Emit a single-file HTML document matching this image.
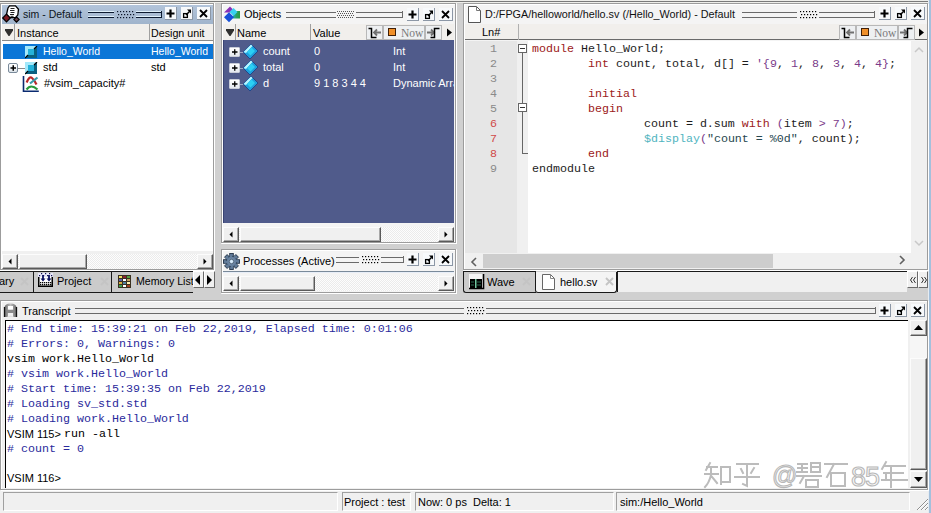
<!DOCTYPE html>
<html><head><meta charset="utf-8">
<style>
*{margin:0;padding:0;box-sizing:border-box}
html,body{width:931px;height:513px;overflow:hidden;background:#d0d0d0;font-family:"Liberation Sans",sans-serif;font-size:11px;color:#000}
.a{position:absolute}
.t{position:absolute;white-space:pre;line-height:13px}
.m{position:absolute;white-space:pre;font-family:"Liberation Mono",monospace;font-size:11.67px;line-height:15px}
.b{position:absolute;width:12px;height:13px;background:#f7f9fb;border-right:1px solid #8c97a6;border-bottom:1px solid #8c97a6}
.b svg{position:absolute;left:0;top:0}
.grip{position:absolute;height:9px}
.sbb{background:#f0f0f0;border:1px solid;border-color:#fcfcfc #5a5a5a #5a5a5a #fcfcfc;box-shadow:inset -1px -1px 0 #a8a8a8}
.hb{position:absolute;background:#f1efec}
</style></head><body>
<!-- top strip -->
<div class="a" style="left:0;top:0;width:931px;height:4px;background:#eeeeea"></div>
<div class="a" style="left:0;top:1px;width:931px;height:1px;background:#7a7a7a"></div>
<div class="a" style="left:0;top:3px;width:931px;height:1px;background:#c8c8c8"></div>

<!-- ============ SIM PANEL ============ -->
<div class="a" style="left:0;top:3px;width:215px;height:268px;background:#fff"></div>
<div class="a" style="left:2px;top:5px;width:211px;height:19px;background:linear-gradient(#b2c4da,#a0b4cc)"></div>
<svg class="a" style="left:0;top:0" width="24" height="24">
 <path d="M9.5 5.8H15.5L18.5 9.2L17.8 15L15.5 17.6H9.5L6.5 14.5L7.5 10L8 8z" fill="#fff" stroke="#000" stroke-width="1.3"/>
 <path d="M10.5 8.5h4M10 10.5h4.5M10.5 12.5h4M10 14.5h4M10.5 16.3h3" stroke="#222" stroke-width="1"/>
 <path d="M6.5 14.2L10.3 18L6.5 21.8L2.7 18z" fill="#7a1a22" stroke="#000" stroke-width="1.2"/>
 <path d="M16.5 16.8L19.2 19.5L16.5 22.2L13.8 19.5z" fill="#6a4048" stroke="#000" stroke-width="1.1"/>
</svg>
<div class="t" style="left:23px;top:8px;font-size:10.5px;color:#0c1420">sim - Default</div>
<svg class="a" style="left:88px;top:10px" width="74" height="10"><rect x="0" y="1" width="26" height="1" fill="#dff0fa"/><rect x="48" y="1" width="26" height="1" fill="#dff0fa"/><rect x="0" y="2" width="26" height="1" fill="#0c1a30"/><rect x="48" y="2" width="26" height="1" fill="#0c1a30"/><rect x="0" y="6" width="26" height="1" fill="#dff0fa"/><rect x="48" y="6" width="26" height="1" fill="#dff0fa"/><rect x="0" y="7" width="26" height="1" fill="#0c1a30"/><rect x="48" y="7" width="26" height="1" fill="#0c1a30"/><rect x="73" y="1" width="1" height="7" fill="#0c1a30"/><g fill="#0a1428"><rect x="29" y="1" width="1.2" height="1.2"/><rect x="32" y="1" width="1.2" height="1.2"/><rect x="35" y="1" width="1.2" height="1.2"/><rect x="38" y="1" width="1.2" height="1.2"/><rect x="41" y="1" width="1.2" height="1.2"/><rect x="44" y="1" width="1.2" height="1.2"/><rect x="30" y="4" width="1.2" height="1.2"/><rect x="33" y="4" width="1.2" height="1.2"/><rect x="36" y="4" width="1.2" height="1.2"/><rect x="39" y="4" width="1.2" height="1.2"/><rect x="42" y="4" width="1.2" height="1.2"/><rect x="45" y="4" width="1.2" height="1.2"/><rect x="29" y="7" width="1.2" height="1.2"/><rect x="32" y="7" width="1.2" height="1.2"/><rect x="35" y="7" width="1.2" height="1.2"/><rect x="38" y="7" width="1.2" height="1.2"/><rect x="41" y="7" width="1.2" height="1.2"/><rect x="44" y="7" width="1.2" height="1.2"/></g></svg><div class="b" style="left:165px;top:7px"><svg width="11" height="12"><path d="M1.5 6.5h8M5.5 2.5v8" stroke="#000" stroke-width="2.2"/></svg></div>
<div class="b" style="left:181px;top:7px"><svg width="11" height="12"><rect x="2.6" y="6.6" width="3.8" height="3.8" fill="none" stroke="#000" stroke-width="1.3"/><path d="M5 8L8.5 4.5" stroke="#000" stroke-width="1.4"/><path d="M6 2.5H10V6.5z" fill="#000"/></svg></div>
<div class="b" style="left:197px;top:7px;width:14px"><svg width="13" height="12"><path d="M3 3l7 7M10 3l-7 7" stroke="#000" stroke-width="1.8"/></svg></div>


<!-- header -->
<div class="hb" style="left:2px;top:24px;width:211px;height:17px;border-bottom:1px solid #8a8a8a"></div>
<div class="a" style="left:14px;top:24px;width:1px;height:16px;background:#a0a0a0"></div>
<div class="a" style="left:149px;top:24px;width:1px;height:16px;background:#a0a0a0"></div>
<svg class="a" style="left:5px;top:29px" width="8" height="7"><path d="M0 0h8v1.5L4.5 7 3.5 7 0 1.5z" fill="#303030"/></svg>
<div class="t" style="left:17px;top:27px;font-size:11px">Instance</div>
<div class="t" style="left:151px;top:27px;font-size:10.7px">Design unit</div>

<!-- tree -->
<div class="a" style="left:3px;top:44px;width:210px;height:15px;background:#0b76d7"></div>
<svg class="a" style="left:25px;top:46px" width="13" height="13" viewBox="0 0 13 13">
 <rect x="0" y="0" width="12" height="12" fill="#a4e8fa"/><path d="M12 0V12H0L3 9H9V3z" fill="#0a6080"/><rect x="3" y="3" width="6" height="6" fill="#26b2da"/><path d="M12 0L9 3M0 12L3 9" stroke="#000" stroke-width="1.2"/>
</svg>
<div class="t" style="left:43px;top:45px;font-size:10.5px;color:#fff">Hello_World</div>
<div class="t" style="left:151px;top:45px;font-size:10.5px;color:#fff">Hello_World</div>

<div class="a" style="left:8px;top:63px;width:10px;height:10px;border:1px solid #7a8a9a;border-radius:2px;background:linear-gradient(#fff,#dde4ea)"></div>
<svg class="a" style="left:8px;top:63px" width="25" height="10"><path d="M2.5 5h5.5M5.25 2.2v5.6" stroke="#000" stroke-width="1.5"/><path d="M10 5.5h7" stroke="#8a8a8a"/></svg>
<svg class="a" style="left:25px;top:62px" width="13" height="13" viewBox="0 0 13 13">
 <rect x="0" y="0" width="12" height="12" fill="#a4e8fa"/><path d="M12 0V12H0L3 9H9V3z" fill="#0a6080"/><rect x="3" y="3" width="6" height="6" fill="#26b2da"/><path d="M12 0L9 3M0 12L3 9" stroke="#000" stroke-width="1.2"/>
</svg>
<div class="t" style="left:43px;top:61px;font-size:11px">std</div>
<div class="t" style="left:151px;top:61px;font-size:11px">std</div>

<svg class="a" style="left:20px;top:74px" width="22" height="20">
 <path d="M3.5 2v15.3h15.3" fill="none" stroke="#0a2a70" stroke-width="1.6"/>
 <path d="M6.6 8.5Q9.5 1.5 12 4Q14.5 6 16.5 10.5" fill="none" stroke="#b82828" stroke-width="2.2"/>
 <path d="M17.5 3.5L10 9.5" fill="none" stroke="#3a9aa8" stroke-width="2.2"/>
 <path d="M6.5 15.5Q11 9.5 17.5 15.5" fill="none" stroke="#2a9a3a" stroke-width="2.2"/>
</svg>
<div class="t" style="left:44px;top:77px;font-size:11px">#vsim_capacity#</div>

<!-- ============ OBJECTS PANEL ============ -->
<div class="a" style="left:221px;top:3px;width:236px;height:241px;background:#f4f4f4"></div>

<svg class="a" style="left:222px;top:4px" width="22" height="20">
 <defs><linearGradient id="gg" x1="0" x2="1"><stop offset="0" stop-color="#20b0b0"/><stop offset="0.5" stop-color="#2aa060"/><stop offset="1" stop-color="#2a9a40"/></linearGradient></defs>
 <path d="M2 8.5L8 2.5L11 5.5L8 8.5z" fill="#8a30b8"/>
 <rect x="11" y="7" width="7" height="7.5" fill="url(#gg)"/>
 <path d="M7.5 8L11.5 4L15.5 8L11.5 12z" fill="#38d0f0"/>
 <path d="M2 13.2L7 8.2L12 13.2L7 18.2z" fill="#1850d8"/>
</svg>
<div class="t" style="left:244px;top:8px;font-size:11px">Objects</div><div class="b" style="left:407px;top:8px"><svg width="11" height="12"><path d="M1.5 6.5h8M5.5 2.5v8" stroke="#000" stroke-width="2.2"/></svg></div>
<div class="b" style="left:423px;top:8px"><svg width="11" height="12"><rect x="2.6" y="6.6" width="3.8" height="3.8" fill="none" stroke="#000" stroke-width="1.3"/><path d="M5 8L8.5 4.5" stroke="#000" stroke-width="1.4"/><path d="M6 2.5H10V6.5z" fill="#000"/></svg></div>
<div class="b" style="left:439px;top:8px;width:14px"><svg width="13" height="12"><path d="M3 3l7 7M10 3l-7 7" stroke="#000" stroke-width="1.8"/></svg></div>

<svg class="a" style="left:286px;top:10px" width="118" height="10">
 <rect x="0" y="2" width="50" height="1" fill="#6a6a6a"/><rect x="0" y="7" width="50" height="1" fill="#6a6a6a"/>
 <rect x="70" y="2" width="47" height="1" fill="#6a6a6a"/><rect x="70" y="7" width="47" height="1" fill="#6a6a6a"/>
 <rect x="116" y="1" width="1" height="7" fill="#6a6a6a"/>
 <g fill="#555"><rect x="51" y="1" width="1" height="1"/><rect x="53" y="1" width="1" height="1"/><rect x="55" y="1" width="1" height="1"/><rect x="57" y="1" width="1" height="1"/><rect x="59" y="1" width="1" height="1"/><rect x="61" y="1" width="1" height="1"/><rect x="63" y="1" width="1" height="1"/><rect x="65" y="1" width="1" height="1"/><rect x="67" y="1" width="1" height="1"/>
 <rect x="52" y="3" width="1" height="1"/><rect x="54" y="3" width="1" height="1"/><rect x="56" y="3" width="1" height="1"/><rect x="58" y="3" width="1" height="1"/><rect x="60" y="3" width="1" height="1"/><rect x="62" y="3" width="1" height="1"/><rect x="64" y="3" width="1" height="1"/><rect x="66" y="3" width="1" height="1"/>
 <rect x="51" y="5" width="1" height="1"/><rect x="53" y="5" width="1" height="1"/><rect x="55" y="5" width="1" height="1"/><rect x="57" y="5" width="1" height="1"/><rect x="59" y="5" width="1" height="1"/><rect x="61" y="5" width="1" height="1"/><rect x="63" y="5" width="1" height="1"/><rect x="65" y="5" width="1" height="1"/><rect x="67" y="5" width="1" height="1"/>
 <rect x="52" y="7" width="1" height="1"/><rect x="54" y="7" width="1" height="1"/><rect x="56" y="7" width="1" height="1"/><rect x="58" y="7" width="1" height="1"/><rect x="60" y="7" width="1" height="1"/><rect x="62" y="7" width="1" height="1"/><rect x="64" y="7" width="1" height="1"/><rect x="66" y="7" width="1" height="1"/></g>
</svg>

<div class="hb" style="left:223px;top:24px;width:231px;height:16px"></div>
<div class="a" style="left:235px;top:24px;width:1px;height:16px;background:#a0a0a0"></div>
<div class="a" style="left:310px;top:24px;width:1px;height:16px;background:#a0a0a0"></div>
<svg class="a" style="left:226px;top:29px" width="8" height="7"><path d="M0 0h8v1.5L4.5 7 3.5 7 0 1.5z" fill="#303030"/></svg>
<div class="t" style="left:237px;top:27px;font-size:11px">Name</div>
<div class="t" style="left:313px;top:27px;font-size:11px">Value</div>
<!-- toolbar in header -->
<div class="a" style="left:366px;top:25px;width:17px;height:15px;background:#eef0f2;border:1px solid #b8b8b8"></div>
<svg class="a" style="left:366px;top:25px" width="17" height="15"><path d="M2.5 3.5H5.5V12.5H10.5" fill="none" stroke="#000" stroke-width="1.5"/><path d="M15 7.5H9M11 4.5L8 7.5L11 10.5" fill="none" stroke="#707070" stroke-width="1.8"/></svg>
<div class="a" style="left:383px;top:25px;width:42px;height:15px;background:#eef0f2;border:1px solid #b8b8b8"></div>
<div class="a" style="left:388px;top:28px;width:8px;height:8px;background:#f0902a;border:1px solid #402008"></div>
<div class="t" style="left:401px;top:27px;font-family:'Liberation Serif',serif;font-size:11.5px;color:#7a7a7a">Now</div>
<div class="a" style="left:425px;top:25px;width:17px;height:15px;background:#eef0f2;border:1px solid #b8b8b8"></div>
<svg class="a" style="left:425px;top:25px" width="17" height="15"><path d="M2 7.5H8M6 4.5L9 7.5L6 10.5" fill="none" stroke="#707070" stroke-width="1.8"/><path d="M5.5 12.5H9.5V3.5H14.5" fill="none" stroke="#000" stroke-width="1.5"/></svg>
<svg class="a" style="left:446px;top:28px" width="7" height="10"><path d="M1 0.5l5 4-5 4z" fill="#000"/></svg>

<div class="a" style="left:223px;top:40px;width:231px;height:183px;background:#505b8b;overflow:hidden;border-left:1px solid #3a4474"><div class="a" style="left:5px;top:7px;width:11px;height:10px;border:1px solid #c8ccd8;border-radius:1px;background:linear-gradient(#fff,#e4e8f0)"></div>
<svg class="a" style="left:5px;top:7px" width="16" height="10"><path d="M3 5h5.5M5.75 2.2v5.6" stroke="#000" stroke-width="1.3"/><path d="M11 5.5h7" stroke="#a0a8c0"/></svg>
<svg class="a" style="left:18px;top:3px" width="18" height="17"><path d="M1 9L9 1L16 8L8 16z" fill="#1ea0dc" stroke="#1a3a80" stroke-width="0.8"/><path d="M1.5 9L9 1.5L10.5 3L4 10z" fill="#b8f4ff"/><path d="M5 9L9.5 4.5L13 8L8.5 12.5z" fill="#2ad0f4"/></svg>
<div class="t" style="left:39px;top:5px;font-size:11px;color:#fff">count</div>
<div class="t" style="left:90px;top:5px;font-size:11px;color:#fff">0</div>
<div class="t" style="left:169px;top:5px;font-size:11px;color:#fff">Int</div>
<div class="a" style="left:5px;top:23px;width:11px;height:10px;border:1px solid #c8ccd8;border-radius:1px;background:linear-gradient(#fff,#e4e8f0)"></div>
<svg class="a" style="left:5px;top:23px" width="16" height="10"><path d="M3 5h5.5M5.75 2.2v5.6" stroke="#000" stroke-width="1.3"/><path d="M11 5.5h7" stroke="#a0a8c0"/></svg>
<svg class="a" style="left:18px;top:19px" width="18" height="17"><path d="M1 9L9 1L16 8L8 16z" fill="#1ea0dc" stroke="#1a3a80" stroke-width="0.8"/><path d="M1.5 9L9 1.5L10.5 3L4 10z" fill="#b8f4ff"/><path d="M5 9L9.5 4.5L13 8L8.5 12.5z" fill="#2ad0f4"/></svg>
<div class="t" style="left:39px;top:21px;font-size:11px;color:#fff">total</div>
<div class="t" style="left:90px;top:21px;font-size:11px;color:#fff">0</div>
<div class="t" style="left:169px;top:21px;font-size:11px;color:#fff">Int</div>
<div class="a" style="left:5px;top:39px;width:11px;height:10px;border:1px solid #c8ccd8;border-radius:1px;background:linear-gradient(#fff,#e4e8f0)"></div>
<svg class="a" style="left:5px;top:39px" width="16" height="10"><path d="M3 5h5.5M5.75 2.2v5.6" stroke="#000" stroke-width="1.3"/><path d="M11 5.5h7" stroke="#a0a8c0"/></svg>
<svg class="a" style="left:18px;top:35px" width="18" height="17"><path d="M1 9L9 1L16 8L8 16z" fill="#1ea0dc" stroke="#1a3a80" stroke-width="0.8"/><path d="M1.5 9L9 1.5L10.5 3L4 10z" fill="#b8f4ff"/><path d="M5 9L9.5 4.5L13 8L8.5 12.5z" fill="#2ad0f4"/></svg>
<div class="t" style="left:39px;top:37px;font-size:11px;color:#fff">d</div>
<div class="t" style="left:90px;top:37px;font-size:11px;color:#fff">9 1 8 3 4 4</div>
<div class="t" style="left:169px;top:37px;font-size:11px;color:#fff">Dynamic Array</div>
</div><div class="a" style="left:2px;top:251px;width:211px;height:3px;background:#f0f0f0"></div><div class="a" style="left:2px;top:254px;width:211px;height:15px;background:repeating-conic-gradient(#fdfdfd 0 25%,#ebebeb 0 50%) 0 0/2px 2px"></div><div class="a sbb" style="left:2px;top:254px;width:16px;height:15px"></div><svg class="a" style="left:8px;top:258px" width="6" height="8"><path d="M3.5 0.5v6L0.5 3.5z" fill="#000"/></svg><div class="a sbb" style="left:19px;top:254px;width:68px;height:15px"></div><div class="a sbb" style="left:197px;top:254px;width:16px;height:15px"></div><svg class="a" style="left:203px;top:258px" width="6" height="8"><path d="M0.5 0.5v6l3-3z" fill="#000"/></svg><div class="a" style="left:223px;top:223px;width:232px;height:4px;background:#f4f4f4"></div><div class="a" style="left:223px;top:227px;width:231px;height:15px;background:repeating-conic-gradient(#fdfdfd 0 25%,#ebebeb 0 50%) 0 0/2px 2px"></div><div class="a sbb" style="left:223px;top:227px;width:16px;height:15px"></div><svg class="a" style="left:229px;top:231px" width="6" height="8"><path d="M3.5 0.5v6L0.5 3.5z" fill="#000"/></svg><div class="a sbb" style="left:240px;top:227px;width:141px;height:15px"></div><div class="a sbb" style="left:438px;top:227px;width:16px;height:15px"></div><svg class="a" style="left:444px;top:231px" width="6" height="8"><path d="M0.5 0.5v6l3-3z" fill="#000"/></svg><div class="a" style="left:221px;top:249px;width:236px;height:45px;background:#f4f4f4"></div><svg class="a" style="left:223px;top:253px" width="17" height="17"><g fill="#607a98" stroke="#243448" stroke-width="0.9"><rect x="12.90" y="6.70" width="3.6" height="3.6" transform="rotate(0 14.70 8.50)"/><rect x="11.08" y="11.08" width="3.6" height="3.6" transform="rotate(45 12.88 12.88)"/><rect x="6.70" y="12.90" width="3.6" height="3.6" transform="rotate(90 8.50 14.70)"/><rect x="2.32" y="11.08" width="3.6" height="3.6" transform="rotate(135 4.12 12.88)"/><rect x="0.50" y="6.70" width="3.6" height="3.6" transform="rotate(180 2.30 8.50)"/><rect x="2.32" y="2.32" width="3.6" height="3.6" transform="rotate(225 4.12 4.12)"/><rect x="6.70" y="0.50" width="3.6" height="3.6" transform="rotate(270 8.50 2.30)"/><rect x="11.08" y="2.32" width="3.6" height="3.6" transform="rotate(315 12.88 4.12)"/><circle cx="8.5" cy="8.5" r="5.3"/></g><g fill="#607a98"><rect x="12.90" y="6.70" width="2.6" height="2.6" transform="rotate(0 14.70 8.50)"/><rect x="11.08" y="11.08" width="2.6" height="2.6" transform="rotate(45 12.88 12.88)"/><rect x="6.70" y="12.90" width="2.6" height="2.6" transform="rotate(90 8.50 14.70)"/><rect x="2.32" y="11.08" width="2.6" height="2.6" transform="rotate(135 4.12 12.88)"/><rect x="0.50" y="6.70" width="2.6" height="2.6" transform="rotate(180 2.30 8.50)"/><rect x="2.32" y="2.32" width="2.6" height="2.6" transform="rotate(225 4.12 4.12)"/><rect x="6.70" y="0.50" width="2.6" height="2.6" transform="rotate(270 8.50 2.30)"/><rect x="11.08" y="2.32" width="2.6" height="2.6" transform="rotate(315 12.88 4.12)"/></g><circle cx="8.5" cy="8.5" r="4.2" fill="#6a84a2"/><circle cx="8.5" cy="8.5" r="2.2" fill="#d8ecfc" stroke="#34465c" stroke-width="0.7"/></svg><div class="t" style="left:243px;top:255px;font-size:11px">Processes (Active)</div><svg class="a" style="left:336px;top:255px" width="68" height="10"><rect x="0" y="2" width="23" height="1" fill="#6a6a6a"/><rect x="45" y="2" width="23" height="1" fill="#6a6a6a"/><rect x="0" y="7" width="23" height="1" fill="#6a6a6a"/><rect x="45" y="7" width="23" height="1" fill="#6a6a6a"/><rect x="67" y="1" width="1" height="7" fill="#6a6a6a"/><g fill="#000"><rect x="26" y="1" width="1.2" height="1.2"/><rect x="29" y="1" width="1.2" height="1.2"/><rect x="32" y="1" width="1.2" height="1.2"/><rect x="35" y="1" width="1.2" height="1.2"/><rect x="38" y="1" width="1.2" height="1.2"/><rect x="41" y="1" width="1.2" height="1.2"/><rect x="27" y="4" width="1.2" height="1.2"/><rect x="30" y="4" width="1.2" height="1.2"/><rect x="33" y="4" width="1.2" height="1.2"/><rect x="36" y="4" width="1.2" height="1.2"/><rect x="39" y="4" width="1.2" height="1.2"/><rect x="42" y="4" width="1.2" height="1.2"/><rect x="26" y="7" width="1.2" height="1.2"/><rect x="29" y="7" width="1.2" height="1.2"/><rect x="32" y="7" width="1.2" height="1.2"/><rect x="35" y="7" width="1.2" height="1.2"/><rect x="38" y="7" width="1.2" height="1.2"/><rect x="41" y="7" width="1.2" height="1.2"/></g></svg><div class="b" style="left:407px;top:253px"><svg width="11" height="12"><path d="M1.5 6.5h8M5.5 2.5v8" stroke="#000" stroke-width="2.2"/></svg></div>
<div class="b" style="left:423px;top:253px"><svg width="11" height="12"><rect x="2.6" y="6.6" width="3.8" height="3.8" fill="none" stroke="#000" stroke-width="1.3"/><path d="M5 8L8.5 4.5" stroke="#000" stroke-width="1.4"/><path d="M6 2.5H10V6.5z" fill="#000"/></svg></div>
<div class="b" style="left:439px;top:253px;width:14px"><svg width="13" height="12"><path d="M3 3l7 7M10 3l-7 7" stroke="#000" stroke-width="1.8"/></svg></div>
<div class="a" style="left:223px;top:271px;width:231px;height:1px;background:#7a8a9a"></div><div class="a" style="left:223px;top:272px;width:231px;height:1px;background:#e8eef8"></div><div class="a" style="left:223px;top:276px;width:231px;height:15px;background:repeating-conic-gradient(#fdfdfd 0 25%,#ebebeb 0 50%) 0 0/2px 2px"></div><div class="a sbb" style="left:223px;top:276px;width:16px;height:15px"></div><svg class="a" style="left:229px;top:280px" width="6" height="8"><path d="M3.5 0.5v6L0.5 3.5z" fill="#000"/></svg><div class="a sbb" style="left:240px;top:276px;width:75px;height:15px"></div><div class="a sbb" style="left:438px;top:276px;width:16px;height:15px"></div><svg class="a" style="left:444px;top:280px" width="6" height="8"><path d="M0.5 0.5v6l3-3z" fill="#000"/></svg><div class="a" style="left:463px;top:3px;width:466px;height:268px;background:#f4f4f4"></div><svg class="a" style="left:468px;top:6px" width="13" height="17"><path d="M0.5 0.5h8l4 4v12h-12z" fill="#fff" stroke="#555"/><path d="M8.5 0.5v4h4" fill="none" stroke="#777"/></svg><div class="t" style="left:485px;top:8px;font-size:10.8px;color:#111">D:/FPGA/helloworld/hello.sv (/Hello_World) - Default</div><svg class="a" style="left:742px;top:10px" width="133" height="10"><rect x="0" y="2" width="55" height="1" fill="#6a6a6a"/><rect x="77" y="2" width="56" height="1" fill="#6a6a6a"/><rect x="0" y="7" width="55" height="1" fill="#6a6a6a"/><rect x="77" y="7" width="56" height="1" fill="#6a6a6a"/><rect x="132" y="1" width="1" height="7" fill="#6a6a6a"/><g fill="#000"><rect x="58" y="1" width="1.2" height="1.2"/><rect x="61" y="1" width="1.2" height="1.2"/><rect x="64" y="1" width="1.2" height="1.2"/><rect x="67" y="1" width="1.2" height="1.2"/><rect x="70" y="1" width="1.2" height="1.2"/><rect x="73" y="1" width="1.2" height="1.2"/><rect x="59" y="4" width="1.2" height="1.2"/><rect x="62" y="4" width="1.2" height="1.2"/><rect x="65" y="4" width="1.2" height="1.2"/><rect x="68" y="4" width="1.2" height="1.2"/><rect x="71" y="4" width="1.2" height="1.2"/><rect x="74" y="4" width="1.2" height="1.2"/><rect x="58" y="7" width="1.2" height="1.2"/><rect x="61" y="7" width="1.2" height="1.2"/><rect x="64" y="7" width="1.2" height="1.2"/><rect x="67" y="7" width="1.2" height="1.2"/><rect x="70" y="7" width="1.2" height="1.2"/><rect x="73" y="7" width="1.2" height="1.2"/></g></svg><div class="b" style="left:879px;top:7px"><svg width="11" height="12"><path d="M1.5 6.5h8M5.5 2.5v8" stroke="#000" stroke-width="2.2"/></svg></div>
<div class="b" style="left:895px;top:7px"><svg width="11" height="12"><rect x="2.6" y="6.6" width="3.8" height="3.8" fill="none" stroke="#000" stroke-width="1.3"/><path d="M5 8L8.5 4.5" stroke="#000" stroke-width="1.4"/><path d="M6 2.5H10V6.5z" fill="#000"/></svg></div>
<div class="b" style="left:911px;top:7px;width:14px"><svg width="13" height="12"><path d="M3 3l7 7M10 3l-7 7" stroke="#000" stroke-width="1.8"/></svg></div>
<div class="hb" style="left:465px;top:24px;width:462px;height:16px;border-bottom:1px solid #6a6a6a"></div><div class="a" style="left:518px;top:24px;width:1px;height:16px;background:#b0b0b0"></div><div class="t" style="left:482px;top:26px;font-size:11px">Ln#</div><div class="a" style="left:839px;top:25px;width:17px;height:15px;background:#eef0f2;border:1px solid #b8b8b8"></div>
<svg class="a" style="left:839px;top:25px" width="17" height="15"><path d="M2.5 3.5H5.5V12.5H10.5" fill="none" stroke="#000" stroke-width="1.5"/><path d="M15 7.5H9M11 4.5L8 7.5L11 10.5" fill="none" stroke="#707070" stroke-width="1.8"/></svg>
<div class="a" style="left:856px;top:25px;width:42px;height:15px;background:#eef0f2;border:1px solid #b8b8b8"></div>
<div class="a" style="left:861px;top:28px;width:8px;height:8px;background:#f0902a;border:1px solid #402008"></div>
<div class="t" style="left:874px;top:27px;font-family:'Liberation Serif',serif;font-size:11.5px;color:#7a7a7a">Now</div>
<div class="a" style="left:898px;top:25px;width:17px;height:15px;background:#eef0f2;border:1px solid #b8b8b8"></div>
<svg class="a" style="left:898px;top:25px" width="17" height="15"><path d="M2 7.5H8M6 4.5L9 7.5L6 10.5" fill="none" stroke="#707070" stroke-width="1.8"/><path d="M5.5 12.5H9.5V3.5H14.5" fill="none" stroke="#000" stroke-width="1.5"/></svg>
<svg class="a" style="left:918px;top:28px" width="7" height="10"><path d="M1 0.5l5 4-5 4z" fill="#000"/></svg><div class="a" style="left:465px;top:41px;width:446px;height:212px;background:#fff"></div><div class="a" style="left:465px;top:41px;width:52px;height:212px;background:#e6e6e6"></div><div class="a" style="left:517px;top:41px;width:11px;height:212px;background:#f0f0f0"></div><div class="a" style="left:518px;top:44px;width:9px;height:9px;border:1px solid #666;background:#fff"></div><div class="a" style="left:520px;top:48px;width:5px;height:1px;background:#333"></div><div class="a" style="left:522px;top:53px;width:1px;height:50px;background:#666"></div><div class="a" style="left:518px;top:103px;width:9px;height:9px;border:1px solid #666;background:#fff"></div><div class="a" style="left:520px;top:107px;width:5px;height:1px;background:#333"></div><div class="a" style="left:522px;top:112px;width:1px;height:41px;background:#666"></div><div class="a" style="left:522px;top:153px;width:6px;height:1px;background:#666"></div><div class="m" style="left:490px;top:42px;color:#8a8a8a">1</div><div class="m" style="left:490px;top:57px;color:#8a8a8a">2</div><div class="m" style="left:490px;top:72px;color:#8a8a8a">3</div><div class="m" style="left:490px;top:87px;color:#8a8a8a">4</div><div class="m" style="left:490px;top:102px;color:#8a8a8a">5</div><div class="m" style="left:490px;top:117px;color:#d04848">6</div><div class="m" style="left:490px;top:132px;color:#d04848">7</div><div class="m" style="left:490px;top:147px;color:#d04848">8</div><div class="m" style="left:490px;top:162px;color:#8a8a8a">9</div><div class="m" style="left:532px;top:42px;color:#1c1c1c"><span style="color:#9c2020">module</span> Hello_World;</div><div class="m" style="left:532px;top:57px;color:#1c1c1c">        <span style="color:#9c2020">int</span> count, total, d[] = <span style="color:#7a3a8a">'{</span><span style="color:#7a3a8a">9</span>, <span style="color:#7a3a8a">1</span>, <span style="color:#7a3a8a">8</span>, <span style="color:#7a3a8a">3</span>, <span style="color:#7a3a8a">4</span>, <span style="color:#7a3a8a">4</span><span style="color:#7a3a8a">}</span>;</div><div class="m" style="left:532px;top:72px;color:#1c1c1c"></div><div class="m" style="left:532px;top:87px;color:#1c1c1c">        <span style="color:#9c2020">initial</span></div><div class="m" style="left:532px;top:102px;color:#1c1c1c">        <span style="color:#9c2020">begin</span></div><div class="m" style="left:532px;top:117px;color:#1c1c1c">                count = d.sum <span style="color:#9c2020">with</span> <span style="color:#7a3a8a">(</span>item <span style="color:#7a3a8a">&gt; 7)</span>;</div><div class="m" style="left:532px;top:132px;color:#1c1c1c">                <span style="color:#50b4c0">$display</span><span style="color:#7a3a8a">(</span><span style="color:#284850">"count = %0d"</span>, count);</div><div class="m" style="left:532px;top:147px;color:#1c1c1c">        <span style="color:#9c2020">end</span></div><div class="m" style="left:532px;top:162px;color:#1c1c1c">endmodule</div><div class="a" style="left:911px;top:41px;width:16px;height:212px;background:#f0f0f0"></div><svg class="a" style="left:914px;top:46px" width="10" height="8"><path d="M1 6l4-4 4 4" fill="none" stroke="#c8c8c8" stroke-width="1.5"/></svg><svg class="a" style="left:914px;top:239px" width="10" height="8"><path d="M1 2l4 4 4-4" fill="none" stroke="#c8c8c8" stroke-width="1.5"/></svg><div class="a" style="left:465px;top:253px;width:462px;height:16px;background:#f0f0f0"></div><div class="a" style="left:483px;top:254px;width:290px;height:14px;background:#cdcdcd"></div><svg class="a" style="left:470px;top:257px" width="8" height="10"><path d="M6 1L2 5l4 4" fill="none" stroke="#606060" stroke-width="1.6"/></svg><svg class="a" style="left:898px;top:255px" width="8" height="10"><path d="M2 1l4 4-4 4" fill="none" stroke="#606060" stroke-width="1.6"/></svg><div class="a" style="left:0;top:271px;width:193px;height:22px;background:#cbcbcb;border-top:1px solid #1a1a1a;border-bottom:1px solid #1a1a1a"></div><div class="t" style="left:-1px;top:275px;font-size:11px">ary</div><svg class="a" style="left:20px;top:277px" width="9" height="9"><path d="M1 1l7 7M8 1L1 8" stroke="#c4c4c4" stroke-width="1.8"/></svg><div class="a" style="left:33px;top:272px;width:1px;height:20px;background:#1a1a1a"></div><svg class="a" style="left:37px;top:272px" width="17" height="16"><rect x="1" y="1" width="15" height="6" fill="#e8e8f8"/><rect x="2" y="5" width="13" height="9" fill="#fff"/><g fill="#101050"><rect x="4" y="1" width="1.2" height="1.2"/><rect x="8" y="1" width="1.2" height="1.2"/><rect x="12" y="1" width="1.2" height="1.2"/><rect x="2" y="3" width="1.2" height="1.2"/><rect x="6" y="3" width="1.2" height="1.2"/><rect x="10" y="3" width="1.2" height="1.2"/><rect x="14" y="3" width="1.2" height="1.2"/></g><path d="M6 3v5M12 3v5" stroke="#0a1060" stroke-width="1.8"/><path d="M3.5 6.5h5L6 9.5zM9.5 6.5h5L12 9.5z" fill="#0a1060"/><g fill="#000"><rect x="3" y="10" width="1.3" height="1.3"/><rect x="3" y="12" width="1.3" height="1.3"/><rect x="5" y="10" width="1.3" height="1.3"/><rect x="5" y="12" width="1.3" height="1.3"/><rect x="7" y="10" width="1.3" height="1.3"/><rect x="7" y="12" width="1.3" height="1.3"/><rect x="9" y="10" width="1.3" height="1.3"/><rect x="9" y="12" width="1.3" height="1.3"/><rect x="11" y="10" width="1.3" height="1.3"/><rect x="11" y="12" width="1.3" height="1.3"/><rect x="13" y="10" width="1.3" height="1.3"/><rect x="13" y="12" width="1.3" height="1.3"/></g><path d="M1.75 5v9.25h13.5V5" fill="none" stroke="#000" stroke-width="1.5"/></svg><div class="t" style="left:57px;top:275px;font-size:11px">Project</div><svg class="a" style="left:100px;top:277px" width="9" height="9"><path d="M1 1l7 7M8 1L1 8" stroke="#c4c4c4" stroke-width="1.8"/></svg><div class="a" style="left:111px;top:272px;width:1px;height:20px;background:#1a1a1a"></div><svg class="a" style="left:118px;top:275px" width="13" height="13"><rect x="0" y="0" width="13" height="13" fill="#3a3020"/><rect x="1" y="1" width="3" height="2" fill="#f0e060"/><rect x="5" y="1" width="3" height="2" fill="#8a2030"/><rect x="9" y="1" width="3" height="2" fill="#50a040"/><rect x="1" y="4" width="3" height="2" fill="#6060b0"/><rect x="5" y="4" width="3" height="2" fill="#ffffff"/><rect x="9" y="4" width="3" height="2" fill="#c0a060"/><rect x="1" y="7" width="3" height="2" fill="#d8b040"/><rect x="5" y="7" width="3" height="2" fill="#5080a0"/><rect x="9" y="7" width="3" height="2" fill="#fff0b0"/><rect x="1" y="10" width="3" height="2" fill="#40a050"/><rect x="5" y="10" width="3" height="2" fill="#ffffff"/><rect x="9" y="10" width="3" height="2" fill="#a04020"/></svg><div class="a" style="left:136px;top:272px;width:57px;height:20px;overflow:hidden"><div class="t" style="left:0;top:3px;font-size:10.6px">Memory List</div></div><div class="a" style="left:193px;top:271px;width:11px;height:17px;background:#f0f0f0;border:1px solid;border-color:#fff #6a6a6a #6a6a6a #fff"></div><svg class="a" style="left:195px;top:275px" width="6" height="10"><path d="M5 0v10L0 5z" fill="#000"/></svg><div class="a" style="left:204px;top:271px;width:11px;height:17px;background:#f0f0f0;border:1px solid;border-color:#fff #6a6a6a #6a6a6a #fff"></div><svg class="a" style="left:207px;top:275px" width="6" height="10"><path d="M0 0v10l5-5z" fill="#000"/></svg><div class="a" style="left:463px;top:271px;width:465px;height:22px;background:#d0d0d0"></div><div class="a" style="left:617px;top:271px;width:290px;height:1px;background:#1a1a1a"></div><div class="a" style="left:617px;top:272px;width:290px;height:20px;background:#f0f0f0;border-left:1px solid #1a1a1a"></div><div class="a" style="left:463px;top:271px;width:73px;height:22px;background:#cbcbcb;border:1px solid #1a1a1a;border-right:none;border-radius:0 0 0 3px"></div><div class="a" style="left:535px;top:272px;width:82px;height:21px;background:#f4f4f4;border:1px solid #1a1a1a;border-top:none;border-radius:0 0 3px 3px"></div><svg class="a" style="left:469px;top:274px" width="16" height="16"><rect x="0" y="0" width="14" height="14" fill="#f4f4f4"/><path d="M14.5 0v14.5H0" fill="none" stroke="#000" stroke-width="1.6"/><rect x="1" y="5" width="12" height="9" fill="#000"/><rect x="6" y="5" width="1.5" height="9" fill="#70c8a0"/><path d="M2 8h3M2 11h3M8 8h4M8 11h4" stroke="#2a6a50" stroke-width="1"/></svg><div class="t" style="left:487px;top:276px;font-size:11px">Wave</div><svg class="a" style="left:522px;top:277px" width="9" height="9"><path d="M1 1l7 7M8 1L1 8" stroke="#c4c4c4" stroke-width="1.8"/></svg><svg class="a" style="left:542px;top:274px" width="13" height="16"><path d="M0.5 0.5h8l4 4v11h-12z" fill="#fff" stroke="#666"/><path d="M8.5 0.5v4h4" fill="none" stroke="#888"/></svg><div class="t" style="left:560px;top:276px;font-size:11px">hello.sv</div><svg class="a" style="left:605px;top:277px" width="9" height="9"><path d="M1 1l7 7M8 1L1 8" stroke="#c4c4c4" stroke-width="1.8"/></svg><div class="a" style="left:907px;top:271px;width:11px;height:17px;background:#f0f0f0;border:1px solid;border-color:#fff #6a6a6a #6a6a6a #fff"></div><svg class="a" style="left:910px;top:276px" width="6" height="8"><path d="M2.5 1L0.5 4l2 3M5.5 1L3.5 4l2 3" fill="none" stroke="#333" stroke-width="1"/></svg><div class="a" style="left:918px;top:271px;width:10px;height:17px;background:#f0f0f0;border:1px solid;border-color:#fff #6a6a6a #6a6a6a #fff"></div><svg class="a" style="left:921px;top:276px" width="6" height="8"><path d="M0.5 1l2 3-2 3M3.5 1l2 3-2 3" fill="none" stroke="#333" stroke-width="1"/></svg><div class="a" style="left:0;top:300px;width:929px;height:191px;background:#f0f0f0"></div><svg class="a" style="left:0;top:300px" width="22" height="20"><defs><linearGradient id="tg" x1="0" x2="1"><stop offset="0" stop-color="#6a6a6a"/><stop offset="0.5" stop-color="#c0c0c0"/><stop offset="1" stop-color="#6a6a6a"/></linearGradient></defs><path d="M4.5 17V8Q4.5 3.5 10.5 3.5Q16.5 3.5 16.5 8V17H13V13H8V17z" fill="url(#tg)"/><path d="M4.5 17V7M16.5 17V7" stroke="#101010" stroke-width="1.3"/><rect x="8" y="6" width="5" height="3.6" fill="#fff"/><rect x="7" y="10" width="7" height="3" fill="#8a8a8a"/><path d="M7 17q3.5-3 7 0" fill="#e0e0e0"/></svg><div class="t" style="left:22px;top:305px;font-size:11px">Transcript</div><svg class="a" style="left:75px;top:306px" width="801" height="10"><rect x="0" y="2" width="389" height="1" fill="#6a6a6a"/><rect x="411" y="2" width="390" height="1" fill="#6a6a6a"/><rect x="0" y="7" width="389" height="1" fill="#6a6a6a"/><rect x="411" y="7" width="390" height="1" fill="#6a6a6a"/><rect x="800" y="1" width="1" height="7" fill="#6a6a6a"/><g fill="#000"><rect x="392" y="1" width="1.2" height="1.2"/><rect x="395" y="1" width="1.2" height="1.2"/><rect x="398" y="1" width="1.2" height="1.2"/><rect x="401" y="1" width="1.2" height="1.2"/><rect x="404" y="1" width="1.2" height="1.2"/><rect x="407" y="1" width="1.2" height="1.2"/><rect x="393" y="4" width="1.2" height="1.2"/><rect x="396" y="4" width="1.2" height="1.2"/><rect x="399" y="4" width="1.2" height="1.2"/><rect x="402" y="4" width="1.2" height="1.2"/><rect x="405" y="4" width="1.2" height="1.2"/><rect x="408" y="4" width="1.2" height="1.2"/><rect x="392" y="7" width="1.2" height="1.2"/><rect x="395" y="7" width="1.2" height="1.2"/><rect x="398" y="7" width="1.2" height="1.2"/><rect x="401" y="7" width="1.2" height="1.2"/><rect x="404" y="7" width="1.2" height="1.2"/><rect x="407" y="7" width="1.2" height="1.2"/></g></svg><div class="b" style="left:879px;top:304px"><svg width="11" height="12"><path d="M1.5 6.5h8M5.5 2.5v8" stroke="#000" stroke-width="2.2"/></svg></div>
<div class="b" style="left:895px;top:304px"><svg width="11" height="12"><rect x="2.6" y="6.6" width="3.8" height="3.8" fill="none" stroke="#000" stroke-width="1.3"/><path d="M5 8L8.5 4.5" stroke="#000" stroke-width="1.4"/><path d="M6 2.5H10V6.5z" fill="#000"/></svg></div>
<div class="b" style="left:911px;top:304px;width:14px"><svg width="13" height="12"><path d="M3 3l7 7M10 3l-7 7" stroke="#000" stroke-width="1.8"/></svg></div>
<div class="a" style="left:5px;top:320px;width:903px;height:168px;background:#fff;border-top:1px solid #000;border-left:1px solid #000"></div><div class="m" style="left:7px;top:322px;color:#2a2a9c"># End time: 15:39:21 on Feb 22,2019, Elapsed time: 0:01:06</div><div class="m" style="left:7px;top:337px;color:#2a2a9c"># Errors: 0, Warnings: 0</div><div class="m" style="left:7px;top:352px;color:#000">vsim work.Hello_World</div><div class="m" style="left:7px;top:367px;color:#2a2a9c"># vsim work.Hello_World</div><div class="m" style="left:7px;top:382px;color:#2a2a9c"># Start time: 15:39:35 on Feb 22,2019</div><div class="m" style="left:7px;top:397px;color:#2a2a9c"># Loading sv_std.std</div><div class="m" style="left:7px;top:412px;color:#2a2a9c"># Loading work.Hello_World</div><div class="t" style="left:7px;top:428px;font-size:11px">VSIM 115&gt;</div><div class="m" style="left:64px;top:427px;color:#000">run -all</div><div class="m" style="left:7px;top:442px;color:#2a2a9c"># count = 0</div><div class="t" style="left:7px;top:472px;font-size:11px">VSIM 116&gt;</div><div class="a" style="left:910px;top:320px;width:17px;height:168px;background:#f6f6f6"></div><div class="a sbb" style="left:910px;top:320px;width:17px;height:16px"></div><svg class="a" style="left:914px;top:325px" width="9" height="6"><path d="M0 5h9L4.5 0z" fill="#000"/></svg><div class="a sbb" style="left:910px;top:358px;width:17px;height:112px"></div><div class="a sbb" style="left:910px;top:471px;width:17px;height:17px"></div><svg class="a" style="left:914px;top:477px" width="9" height="6"><path d="M0 0h9L4.5 5z" fill="#000"/></svg><div class="a" style="left:0;top:490px;width:931px;height:23px;background:#f0f0f0"></div><div class="a" style="left:3px;top:492px;width:335px;height:19px;border-bottom:1px solid #fff;border-left:1px solid #a0a0a0;border-top:1px solid #a0a0a0;border-right:1px solid #fff"></div><div class="a" style="left:342px;top:492px;width:69px;height:19px;border-bottom:1px solid #fff;border-left:1px solid #a0a0a0;border-top:1px solid #a0a0a0;border-right:1px solid #fff"></div><div class="a" style="left:415px;top:492px;width:199px;height:19px;border-bottom:1px solid #fff;border-left:1px solid #a0a0a0;border-top:1px solid #a0a0a0;border-right:1px solid #fff"></div><div class="a" style="left:616px;top:492px;width:294px;height:19px;border-bottom:1px solid #fff;border-left:1px solid #a0a0a0;border-top:1px solid #a0a0a0;border-right:1px solid #fff"></div><div class="t" style="left:344px;top:496px;font-size:11px">Project : test</div><div class="t" style="left:418px;top:496px;font-size:11px">Now: 0 ps  Delta: 1</div><div class="t" style="left:620px;top:496px;font-size:11px">sim:/Hello_World</div><svg class="a" style="left:915px;top:497px" width="14" height="14"><path d="M13 2L2 13M13 6L6 13M13 10l-3 3" stroke="#909090" stroke-width="1"/><path d="M13 3L3 13M13 7L7 13M13 11l-2 2" stroke="#fff" stroke-width="1"/></svg><div class="a" style="left:928px;top:0;width:3px;height:513px;background:#e6ecf2"></div><div class="a" style="left:929px;top:0;width:2px;height:513px;background:#a4c0dc"></div><svg class="a" style="left:700px;top:456px" width="212" height="34" viewBox="0 0 212 34">
<g fill="none" stroke="#bcbcbc" stroke-width="2" stroke-linecap="square">
 <!-- 知 -->
 <path d="M10 7l-4 7M7 11h10M5 18h13M11 11v8q-2 8-6 12M12 21l5 6M21 11v17M21 11h9v15h-9"/>
 <!-- 乎 -->
 <path d="M37 8h21M41 13l2 4M54 12l-3 5M35 21h24M47 9v21l-4-2"/>
 <!-- 碧 -->
 <path d="M98 8h9M98 12h9M97 16h10M102 8v8M111 7v9h9V7h-9M111 11h9M97 20h24M104 20l-4 7M106 24h12v7h-12z"/>
 <!-- 石 -->
 <path d="M125 8h22M134 8l-7 13M131 17h14v13h-14z"/>
 <!-- 年 -->
 <path d="M186 6l-4 7M185 10h20M184 17h19M182 24h25M191 10v21M186 17v7"/>
</g>
<text x="72" y="28" font-family="Liberation Sans" font-size="25" fill="#fafafa" stroke="#b8b8b8" stroke-width="1.1">@</text>
<text x="151" y="30" font-family="Liberation Sans" font-size="27" fill="#fafafa" stroke="#b8b8b8" stroke-width="1.1" letter-spacing="-1">85</text>
</svg><div class="a" style="left:1px;top:4px;width:214px;height:267px;border:1px solid #fff"></div><div class="a" style="left:0px;top:3px;width:214px;height:267px;border:1px solid #9c9c9c"></div><div class="a" style="left:222px;top:4px;width:235px;height:240px;border:1px solid #fff"></div><div class="a" style="left:221px;top:3px;width:235px;height:240px;border:1px solid #9c9c9c"></div><div class="a" style="left:222px;top:250px;width:235px;height:44px;border:1px solid #fff"></div><div class="a" style="left:221px;top:249px;width:235px;height:44px;border:1px solid #9c9c9c"></div><div class="a" style="left:464px;top:4px;width:465px;height:267px;border:1px solid #fff"></div><div class="a" style="left:463px;top:3px;width:465px;height:267px;border:1px solid #9c9c9c"></div><div class="a" style="left:1px;top:301px;width:928px;height:190px;border:1px solid #fff"></div><div class="a" style="left:0px;top:300px;width:928px;height:190px;border:1px solid #9c9c9c"></div>
</body></html>
